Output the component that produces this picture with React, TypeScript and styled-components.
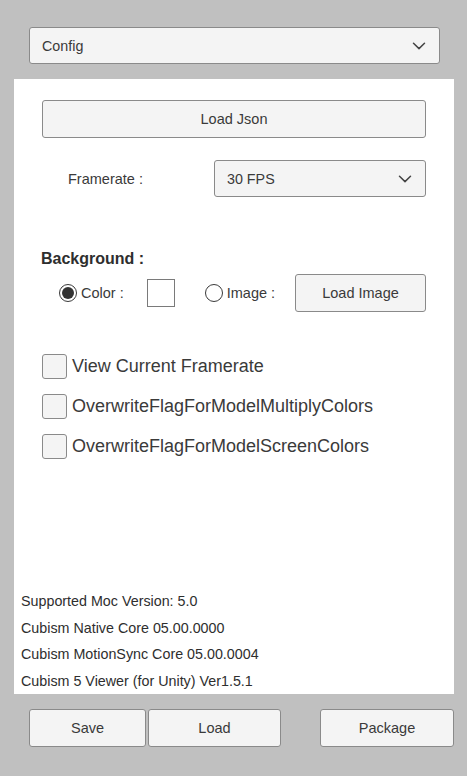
import React from 'react'
import styled, { createGlobalStyle } from 'styled-components'

const Global = createGlobalStyle`
  html, body {
    margin: 0;
    padding: 0;
    background: #c0c0c0;
  }
  body {
    font-family: "Liberation Sans", Arial, sans-serif;
    color: #333;
  }
`

const Page = styled.div`
  width: 467px;
  height: 776px;
  background: #c0c0c0;
  display: flex;
  flex-direction: column;
  padding-top: 27px;
  box-sizing: border-box;
  overflow: hidden;
`

const SelectBox = styled.div<{ width?: number }>`
  display: flex;
  align-items: center;
  justify-content: space-between;
  box-sizing: border-box;
  height: 37px;
  width: ${(p) => (p.width ? `${p.width}px` : 'auto')};
  padding: 0 13px 0 12px;
  background: #f4f4f4;
  border: 1px solid #8a8a8a;
  border-radius: 3px;
  font-size: 14.3px;
  color: #3a3a3a;
`

const HeaderSelect = styled(SelectBox)`
  margin: 0 27px 0 29px;
  padding-left: 12px;
`

const Panel = styled.div`
  margin: 15px 13px 0 14px;
  height: 615px;
  background: #fff;
  display: flex;
  flex-direction: column;
  padding: 21px 28px 0 28px;
  box-sizing: border-box;
`

const Button = styled.div<{ width?: number }>`
  display: flex;
  align-items: center;
  justify-content: center;
  box-sizing: border-box;
  height: 38px;
  width: ${(p) => (p.width ? `${p.width}px` : 'auto')};
  background: #f4f4f4;
  border: 1px solid #8a8a8a;
  border-radius: 3px;
  font-size: 14.5px;
  color: #3a3a3a;
`

const FramerateRow = styled.div`
  display: flex;
  align-items: center;
  justify-content: space-between;
  margin-top: 22px;
  padding-left: 26px;
  font-size: 14.5px;
  color: #3a3a3a;
`

const SectionTitle = styled.div`
  margin-top: 53px;
  margin-left: -1px;
  font-size: 16px;
  font-weight: bold;
  color: #2e2e2e;
`

const RadioRow = styled.div`
  display: flex;
  align-items: center;
  margin-top: 6px;
  padding-left: 17px;
  font-size: 14.5px;
  color: #3a3a3a;
`

const Radio = styled.span<{ checked?: boolean }>`
  width: 18px;
  height: 18px;
  box-sizing: border-box;
  border: 1.5px solid #3a3a3a;
  border-radius: 50%;
  display: flex;
  align-items: center;
  justify-content: center;
  margin-right: 4px;
  &::after {
    content: '';
    display: ${(p) => (p.checked ? 'block' : 'none')};
    width: 12px;
    height: 12px;
    border-radius: 50%;
    background: #333;
  }
`

const ColorSwatch = styled.span`
  width: 28px;
  height: 28px;
  box-sizing: border-box;
  border: 1px solid #7a7a7a;
  background: #fff;
  margin: 0 30px 0 23px;
`

const CheckList = styled.div`
  display: flex;
  flex-direction: column;
  gap: 15px;
  margin-top: 42px;
`

const CheckRow = styled.div`
  display: flex;
  align-items: center;
  font-size: 18px;
  color: #3a3a3a;
`

const CheckBox = styled.span`
  width: 25px;
  height: 25px;
  box-sizing: border-box;
  border: 1px solid #8a8a8a;
  border-radius: 3px;
  background: #f4f4f4;
  margin-right: 5px;
`

const Spacer = styled.div`
  flex: 1;
`

const Info = styled.div`
  display: flex;
  flex-direction: column;
  margin: 0 -21px;
  font-size: 14.3px;
  color: #2e2e2e;
  line-height: 26.5px;
`

const Footer = styled.div`
  display: flex;
  margin: 15px 0 0 29px;
`

const Chevron = () => (
  <svg width="14" height="8" viewBox="0 0 14 8" fill="none">
    <path d="M1.5 1.2 L7 6.6 L12.5 1.2" stroke="#444" strokeWidth="1.5" strokeLinecap="round" strokeLinejoin="round" />
  </svg>
)

const checks = [
  'View Current Framerate',
  'OverwriteFlagForModelMultiplyColors',
  'OverwriteFlagForModelScreenColors',
]

const info = [
  'Supported Moc Version: 5.0',
  'Cubism Native Core 05.00.0000',
  'Cubism MotionSync Core 05.00.0004',
  'Cubism 5 Viewer (for Unity) Ver1.5.1',
]

export default function App() {
  return (
    <Page>
      <Global />
      <HeaderSelect>
        <span>Config</span>
        <Chevron />
      </HeaderSelect>
      <Panel>
        <Button>Load Json</Button>
        <FramerateRow>
          <span>Framerate :</span>
          <SelectBox width={212}>
            <span>30 FPS</span>
            <Chevron />
          </SelectBox>
        </FramerateRow>
        <SectionTitle>Background :</SectionTitle>
        <RadioRow>
          <Radio checked />
          <span>Color :</span>
          <ColorSwatch />
          <Radio />
          <span>Image :</span>
          <Spacer />
          <Button width={131}>Load Image</Button>
        </RadioRow>
        <CheckList>
          {checks.map((c) => (
            <CheckRow key={c}>
              <CheckBox />
              <span>{c}</span>
            </CheckRow>
          ))}
        </CheckList>
        <Spacer />
        <Info>
          {info.map((t) => (
            <span key={t}>{t}</span>
          ))}
        </Info>
      </Panel>
      <Footer>
        <Button width={117}>Save</Button>
        <Button width={133} style={{ marginLeft: 2 }}>Load</Button>
        <Spacer />
        <Button width={134} style={{ marginRight: 13 }}>Package</Button>
      </Footer>
    </Page>
  )
}
